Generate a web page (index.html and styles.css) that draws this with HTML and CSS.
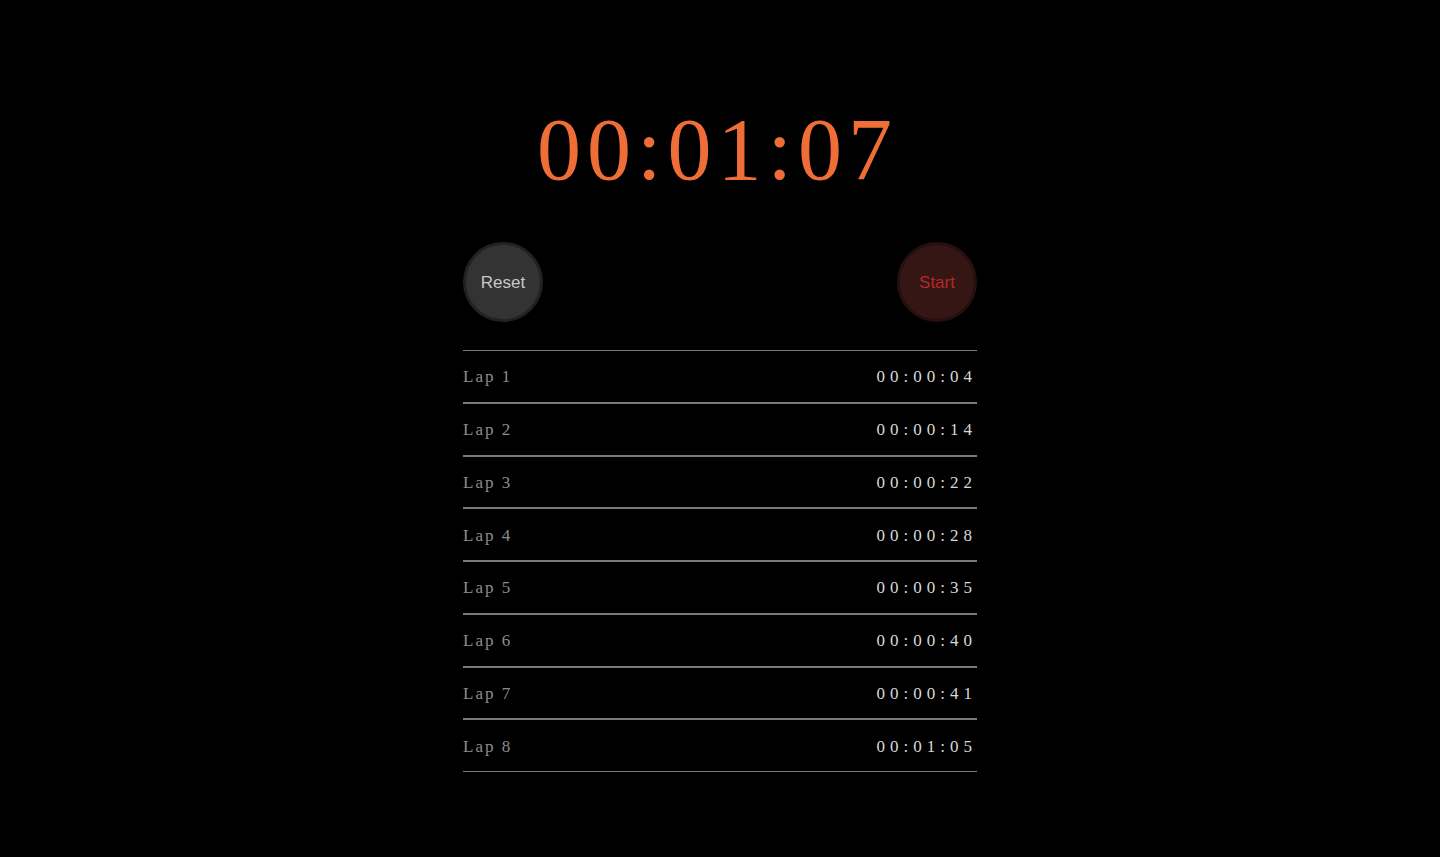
FILE: index.html
```html
<!DOCTYPE html>
<html lang="en">
<head>
    <meta charset="UTF-8">
    <meta name="viewport" content="width=device-width, initial-scale=1.0">
    <title>Stopwatch</title>
    <link rel="stylesheet" href="styles.css">
</head>
<body>
    <div class="watch">
        <div class="display" id="display">00:01:07</div>

        <div class="controls">
            <button class="round reset" onclick="reset()">Reset</button>
            <button class="round start" onclick="toggle()">Start</button>
        </div>

        <ul class="laps" id="laps">
            <li><span class="lap-name">Lap 1</span><span class="lap-time">00:00:04</span></li>
            <li><span class="lap-name">Lap 2</span><span class="lap-time">00:00:14</span></li>
            <li><span class="lap-name">Lap 3</span><span class="lap-time">00:00:22</span></li>
            <li><span class="lap-name">Lap 4</span><span class="lap-time">00:00:28</span></li>
            <li><span class="lap-name">Lap 5</span><span class="lap-time">00:00:35</span></li>
            <li><span class="lap-name">Lap 6</span><span class="lap-time">00:00:40</span></li>
            <li><span class="lap-name">Lap 7</span><span class="lap-time">00:00:41</span></li>
            <li><span class="lap-name">Lap 8</span><span class="lap-time">00:01:05</span></li>
        </ul>
    </div>
</body>
</html>
```
FILE: styles.css
```css
body {
    margin: 0;
    background-color: #000;
    font-family: "Liberation Serif", "Times New Roman", serif;
}
.watch {
    width: 514px;
    margin: 0 auto;
    padding-top: 98px;
}
.display {
    text-align: center;
    color: #ef6e37;
    font-size: 88px;
    line-height: 104px;
    letter-spacing: 6px;
    padding-right: 5px;
}
.controls {
    display: flex;
    justify-content: space-between;
    margin-top: 40px;
}
.round {
    width: 80px;
    height: 80px;
    border-radius: 50%;
    font-family: "Liberation Sans", Arial, sans-serif;
    font-size: 17px;
    padding: 2px 0 0;
    cursor: pointer;
}
.reset {
    background-color: #333;
    border: 3px solid #222;
    color: #c8c8c8;
}
.start {
    background-color: #361614;
    border: 3px solid #26100e;
    color: #b02a26;
}
.laps {
    list-style: none;
    margin: 28px 0 0;
    padding: 0;
}
.laps li {
    display: flex;
    justify-content: space-between;
    align-items: center;
    box-sizing: border-box;
    height: 52.75px;
    padding-top: 2px;
    border-top: 1px solid #7a7a7a;
    border-bottom: 1px solid #7a7a7a;
    font-size: 17px;
}
.lap-name {
    color: #8c8c8c;
    letter-spacing: 2px;
}
.lap-time {
    color: #d8d8d8;
    letter-spacing: 5px;
}
```
